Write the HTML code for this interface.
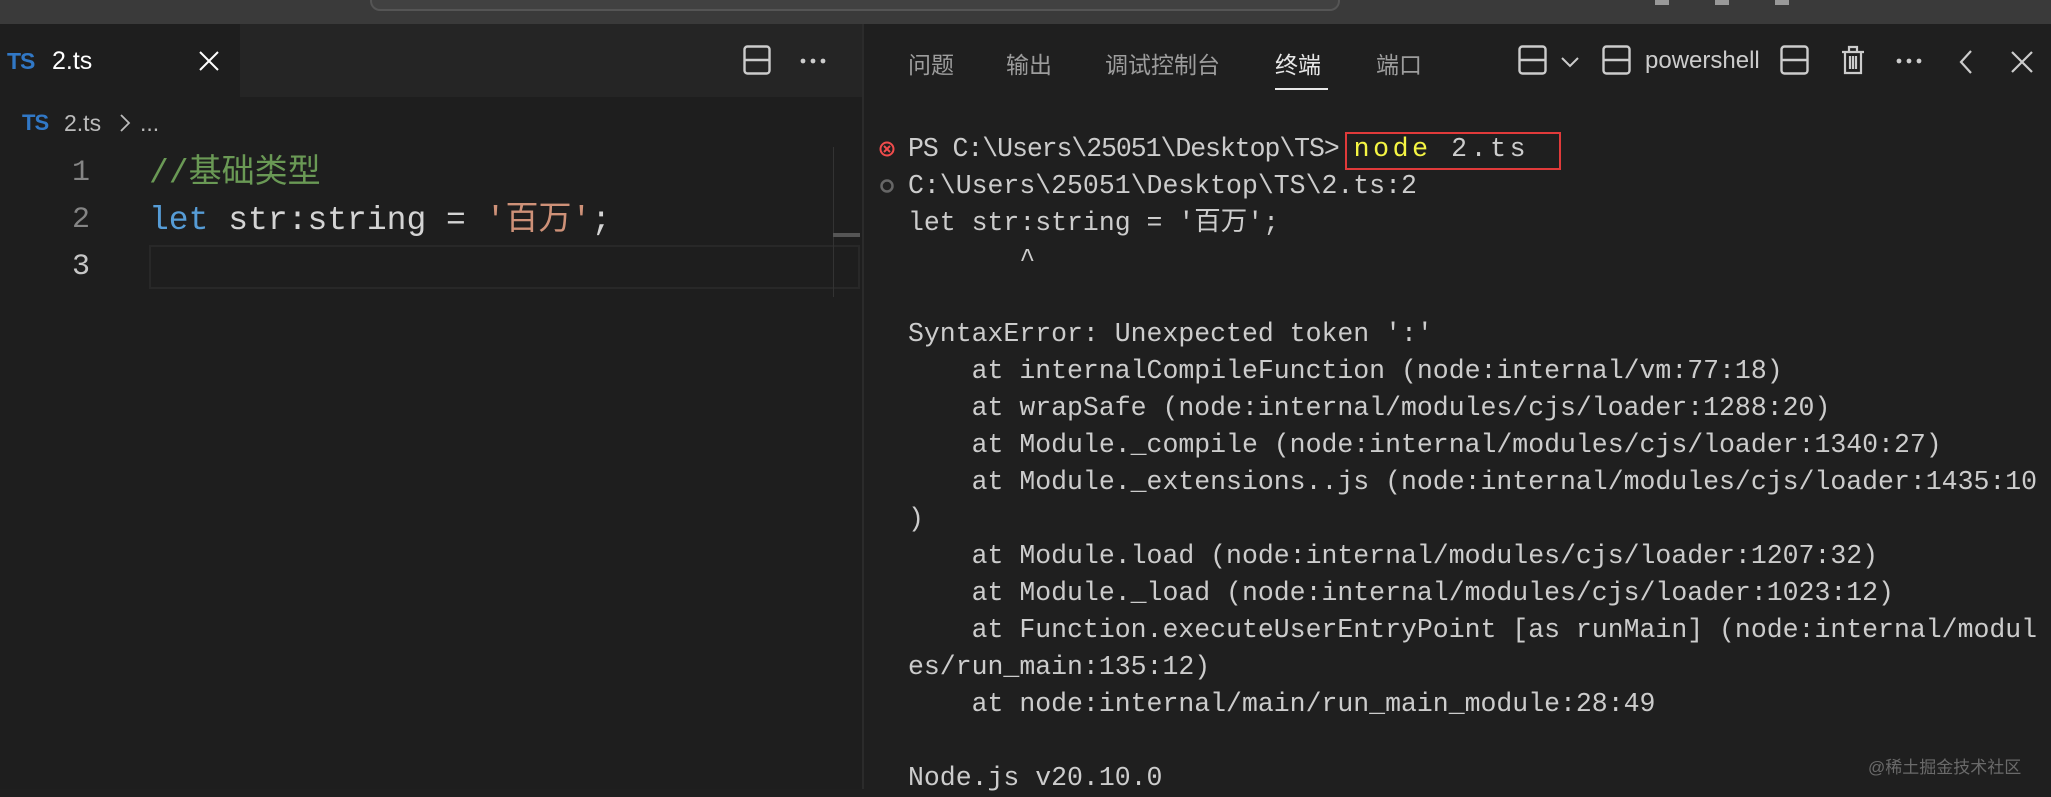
<!DOCTYPE html>
<html><head><meta charset="utf-8"><style>
*{margin:0;padding:0;box-sizing:border-box}
body{width:2051px;height:789px;background:#1f1f1f;position:relative;overflow:hidden;font-family:"Liberation Sans","Noto Sans CJK SC",sans-serif;color:#ccc}
.a{position:absolute;white-space:pre}
.mono{font-family:"Liberation Mono","Noto Sans CJK SC",monospace}
.t{font-size:26.5px;color:#cccccc;line-height:37px;left:908px}
.c{font-size:33px;line-height:47px;left:149px;color:#d4d4d4}
.ln{font-size:30px;line-height:47px;width:60px;text-align:right;left:30px;color:#858585}
</style></head><body>
<div class="a" style="left:0;top:0;width:2051px;height:24px;background:#3a3a3a"></div>
<div class="a" style="left:370px;top:-4px;width:970px;height:15px;border:2px solid #555;border-top:none;border-radius:0 0 10px 10px;background:#414141"></div>
<div class="a" style="left:1655px;top:0;width:14px;height:5px;background:#999"></div>
<div class="a" style="left:1715px;top:0;width:14px;height:5px;background:#999"></div>
<div class="a" style="left:1775px;top:0;width:14px;height:5px;background:#999"></div>
<!-- left editor -->
<div class="a" style="left:0;top:24px;width:862px;height:73px;background:#252525"></div>
<div class="a" style="left:0;top:24px;width:240px;height:73px;background:#1e1e1e"></div>
<div class="a" style="left:0;top:97px;width:862px;height:692px;background:#1e1e1e"></div>
<div class="a" style="left:7px;top:48px;font-size:23px;font-weight:bold;color:#3178c6;letter-spacing:-1px">TS</div>
<div class="a" style="left:52px;top:47px;font-size:25px;color:#fff">2.ts</div>
<svg class="a" style="left:198px;top:50px" width="22" height="22"><path d="M2 2L20 20M20 2L2 20" stroke="#fff" stroke-width="2"/></svg>
<svg class="a" style="left:743px;top:45px" width="28" height="30"><rect x="1.5" y="1.5" width="25" height="27" rx="3" fill="none" stroke="#ccc" stroke-width="2.4"/><path d="M1.5 15H26.5" stroke="#ccc" stroke-width="2.4"/></svg>
<svg class="a" style="left:799px;top:56px" width="30" height="10"><circle cx="4" cy="5" r="2.4" fill="#ccc"/><circle cx="14" cy="5" r="2.4" fill="#ccc"/><circle cx="24" cy="5" r="2.4" fill="#ccc"/></svg>
<div class="a" style="left:22px;top:110px;font-size:22px;font-weight:bold;color:#3178c6;letter-spacing:-1px">TS</div>
<div class="a" style="left:64px;top:110px;font-size:23px;color:#bbb">2.ts</div>
<svg class="a" style="left:119px;top:113px" width="12" height="20"><path d="M2 2L10 10L2 18" fill="none" stroke="#bbb" stroke-width="1.8"/></svg>
<div class="a" style="left:140px;top:110px;font-size:23px;color:#bbb">...</div>
<div class="a" style="left:149px;top:245px;width:711px;height:44px;border:2px solid #282828"></div>
<div class="a" style="left:833px;top:147px;width:1px;height:150px;background:#333"></div>
<div class="a" style="left:833px;top:233px;width:27px;height:4px;background:#555"></div>
<div class="a mono ln" style="top:150px">1</div>
<div class="a mono ln" style="top:197px">2</div>
<div class="a mono ln" style="top:244px;color:#c6c6c6">3</div>
<div class="a mono c" style="top:150px;color:#6a9955">//基础类型</div>
<div class="a mono c" style="top:197px"><span style="color:#569cd6">let</span> str:string = <span style="color:#ce9178">'百万'</span>;</div>
<!-- divider -->
<div class="a" style="left:862px;top:24px;width:2px;height:765px;background:#2b2b2b"></div>
<!-- terminal -->
<div class="a" style="left:908px;top:46px;font-size:23px;color:#9d9d9d">问题</div>
<div class="a" style="left:1006px;top:46px;font-size:23px;color:#9d9d9d">输出</div>
<div class="a" style="left:1105px;top:46px;font-size:23px;color:#9d9d9d">调试控制台</div>
<div class="a" style="left:1275px;top:46px;font-size:23px;color:#e7e7e7">终端</div>
<div class="a" style="left:1275px;top:88px;width:53px;height:2px;background:#e7e7e7"></div>
<div class="a" style="left:1376px;top:46px;font-size:23px;color:#9d9d9d">端口</div>
<svg class="a" style="left:1518px;top:45px" width="30" height="30"><rect x="1.5" y="1.5" width="26" height="27" rx="3" fill="none" stroke="#ccc" stroke-width="2.4"/><path d="M1.5 15H27.5" stroke="#ccc" stroke-width="2.4"/></svg>
<svg class="a" style="left:1560px;top:56px" width="20" height="12"><path d="M2 2L10 10L18 2" fill="none" stroke="#ccc" stroke-width="2"/></svg>
<svg class="a" style="left:1602px;top:45px" width="30" height="30"><rect x="1.5" y="1.5" width="26" height="27" rx="3" fill="none" stroke="#ccc" stroke-width="2.4"/><path d="M1.5 15H27.5" stroke="#ccc" stroke-width="2.4"/></svg>
<div class="a" style="left:1645px;top:47px;font-size:24px;color:#ccc">powershell</div>
<svg class="a" style="left:1780px;top:45px" width="30" height="30"><rect x="1.5" y="1.5" width="26" height="27" rx="3" fill="none" stroke="#ccc" stroke-width="2.4"/><path d="M1.5 15H27.5" stroke="#ccc" stroke-width="2.4"/></svg>
<svg class="a" style="left:1840px;top:44px" width="26" height="32"><path d="M2 8H24M9 8V3H17V8M5 8V29H21V8M10 12V25M13 12V25M16 12V25" fill="none" stroke="#ccc" stroke-width="2.2"/></svg>
<svg class="a" style="left:1895px;top:56px" width="30" height="10"><circle cx="4" cy="5" r="2.4" fill="#ccc"/><circle cx="14" cy="5" r="2.4" fill="#ccc"/><circle cx="24" cy="5" r="2.4" fill="#ccc"/></svg>
<svg class="a" style="left:1958px;top:49px" width="16" height="26"><path d="M13 2L3 13L13 24" fill="none" stroke="#ccc" stroke-width="2.2"/></svg>
<svg class="a" style="left:2010px;top:50px" width="24" height="24"><path d="M2 2L22 22M22 2L2 22" stroke="#ccc" stroke-width="2.2"/></svg>
<svg class="a" style="left:879px;top:141px" width="16" height="16"><circle cx="8" cy="8" r="6.5" fill="none" stroke="#f14c4c" stroke-width="2"/><path d="M5 5L11 11M11 5L5 11" stroke="#f14c4c" stroke-width="2"/></svg>
<svg class="a" style="left:879px;top:178px" width="16" height="16"><circle cx="8" cy="8" r="5.5" fill="none" stroke="#666" stroke-width="2.5"/></svg>
<div class="a" style="left:1345px;top:132px;width:216px;height:38px;border:2px solid #e03a3a"></div>
<div class="a mono t" style="top:131px"><span style="letter-spacing:-1.05px">PS C:\Users\25051\Desktop\TS&gt; </span><span style="letter-spacing:3.6px"><span style="color:#f5f543">node</span> 2.ts</span></div>
<div class="a mono t" style="top:168px">C:\Users\25051\Desktop\TS\2.ts:2</div>
<div class="a mono t" style="top:205px">let str:string = '百万';</div>
<div class="a mono t" style="top:242px">       ^</div>
<div class="a mono t" style="top:316px">SyntaxError: Unexpected token ':'</div>
<div class="a mono t" style="top:353px">    at internalCompileFunction (node:internal/vm:77:18)</div>
<div class="a mono t" style="top:390px">    at wrapSafe (node:internal/modules/cjs/loader:1288:20)</div>
<div class="a mono t" style="top:427px">    at Module._compile (node:internal/modules/cjs/loader:1340:27)</div>
<div class="a mono t" style="top:464px">    at Module._extensions..js (node:internal/modules/cjs/loader:1435:10</div>
<div class="a mono t" style="top:501px">)</div>
<div class="a mono t" style="top:538px">    at Module.load (node:internal/modules/cjs/loader:1207:32)</div>
<div class="a mono t" style="top:575px">    at Module._load (node:internal/modules/cjs/loader:1023:12)</div>
<div class="a mono t" style="top:612px">    at Function.executeUserEntryPoint [as runMain] (node:internal/modul</div>
<div class="a mono t" style="top:649px">es/run_main:135:12)</div>
<div class="a mono t" style="top:686px">    at node:internal/main/run_main_module:28:49</div>
<div class="a mono t" style="top:760px">Node.js v20.10.0</div>
<div class="a" style="left:1868px;top:753px;font-size:17px;color:#6a6a6a">@稀土掘金技术社区</div>
</body></html>
